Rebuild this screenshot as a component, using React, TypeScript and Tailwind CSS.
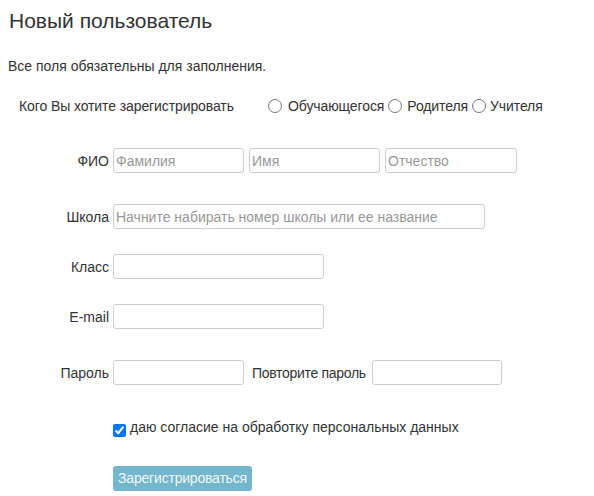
import React from "react";

export default function App() {
  const font = { fontFamily: '"Liberation Sans", Arial, sans-serif' };
  const inputCls =
    "h-[25px] border border-[#cccccc] rounded-[3px] px-[2px] text-[14px] text-[#333] placeholder:text-[#999] bg-white outline-none";
  return (
    <div className="w-[594px] h-[496px] bg-white text-[#333] overflow-hidden" style={font}>
      <div className="pt-[9px] pl-[9px] text-[21px] leading-[24px] text-[#333]">Новый пользователь</div>
      <div className="mt-[23px] pl-[8px] text-[14px] leading-[20px]">Все поля обязательны для заполнения.</div>
      <div className="mt-[20px] pl-[19px] flex items-center h-[20px] text-[14px] leading-[20px] tracking-[-0.1px]">
        <span className="w-[249px]">Кого Вы хотите зарегистрировать</span>
        <label className="flex items-center">
          <input type="radio" name="who" className="m-0 w-[14px] h-[14px]" />
          <span className="ml-[6px]">Обучающегося</span>
        </label>
        <label className="flex items-center ml-[4px]">
          <input type="radio" name="who" className="m-0 w-[14px] h-[14px]" />
          <span className="ml-[5px]">Родителя</span>
        </label>
        <label className="flex items-center ml-[4px]">
          <input type="radio" name="who" className="m-0 w-[14px] h-[14px]" />
          <span className="ml-[4px]">Учителя</span>
        </label>
      </div>

      <div className="mt-[32px] flex items-baseline text-[14px]">
        <span className="w-[109px] text-right">ФИО</span>
        <input className={inputCls + " ml-[4px] w-[131px]"} placeholder="Фамилия" />
        <input className={inputCls + " ml-[5px] w-[131px]"} placeholder="Имя" />
        <input className={inputCls + " ml-[5px] w-[132px]"} placeholder="Отчество" />
      </div>

      <div className="mt-[31px] flex items-baseline text-[14px]">
        <span className="w-[109px] text-right">Школа</span>
        <input
          className={inputCls + " ml-[4px] w-[372px]"}
          placeholder="Начните набирать номер школы или ее название"
        />
      </div>

      <div className="mt-[25px] flex items-baseline text-[14px]">
        <span className="w-[109px] text-right">Класс</span>
        <input className={inputCls + " ml-[4px] w-[211px]"} />
      </div>

      <div className="mt-[25px] flex items-baseline text-[14px]">
        <span className="w-[109px] text-right">E-mail</span>
        <input className={inputCls + " ml-[4px] w-[211px]"} />
      </div>

      <div className="mt-[31px] flex items-baseline text-[14px]">
        <span className="w-[109px] text-right">Пароль</span>
        <input type="password" className={inputCls + " ml-[4px] w-[131px]"} />
        <span className="ml-[8px] w-[120px] whitespace-nowrap tracking-[-0.3px]">Повторите пароль</span>
        <input type="password" className={inputCls + " w-[130px]"} />
      </div>

      <div className="mt-[32px] pl-[113px] flex items-center h-[20px] text-[14px] leading-[20px]">
        <input type="checkbox" defaultChecked className="m-0 mt-[6px] w-[13px] h-[13px] accent-[#0075ff]" />
        <span className="ml-[4px]">даю согласие на обработку персональных данных</span>
      </div>

      <div className="mt-[29px] pl-[113px]">
        <button
          type="button"
          className="h-[25px] w-[139px] rounded-[3px] bg-[#74b6cb] text-[#eef8fb] text-[14px] leading-[25px] px-[3px] whitespace-nowrap tracking-[-0.2px]"
        >
          Зарегистрироваться
        </button>
      </div>
    </div>
  );
}
